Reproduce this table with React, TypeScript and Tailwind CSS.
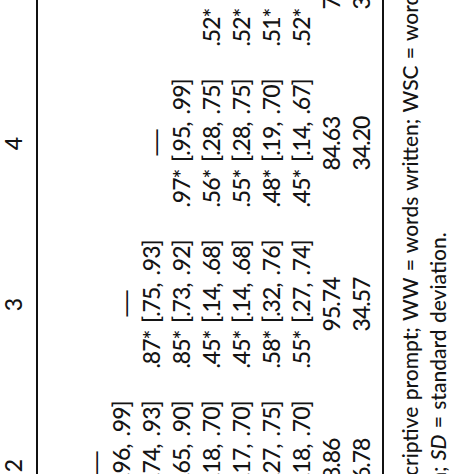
const rows: string[][] = [
  ['—', '', '', ''],
  ['.98* [.96, .99]', '—', '', ''],
  ['.86* [.74, .93]', '.87* [.75, .93]', '—', ''],
  ['.81* [.65, .90]', '.85* [.73, .92]', '.97* [.95, .99]', '—'],
  ['.48* [.18, .70]', '.45* [.14, .68]', '.56* [.28, .75]', '.52* [.24, .72]'],
  ['.47* [.17, .70]', '.45* [.14, .68]', '.55* [.28, .75]', '.52* [.24, .72]'],
  ['.55* [.27, .75]', '.58* [.32, .76]', '.48* [.19, .70]', '.51* [.22, .71]'],
  ['.48* [.18, .70]', '.55* [.27, .74]', '.45* [.14, .67]', '.52* [.24, .72]'],
  ['98.86', '95.74', '84.63', '74.37'],
  ['36.78', '34.57', '34.20', '31.62'],
];

function Cell({ v }: { v: string }) {
  if (v === '—') {
    return (
      <div>
        <span className="inline-block scale-x-[1.7] translate-y-[4px]">—</span>
      </div>
    );
  }
  return <div>{v}</div>;
}

export default function App() {
  return (
    <div className="w-[474px] h-[474px] overflow-hidden bg-white">
      <div className="w-[474px] h-[474px] -rotate-90 overflow-hidden bg-white text-[#141414] [font-family:Lato,sans-serif] font-medium">
        <div className="-mt-[2px] -ml-[72px] w-[644px] grid grid-cols-[161px_161px_161px_161px] h-[30px] leading-[30px] text-center text-[23px]">
          <div>2</div>
          <div>3</div>
          <div>4</div>
          <div>5</div>
        </div>
        <div className="mt-[8.25px] h-[1.5px] w-full bg-[#111]" />
        <div className="pt-[38.5px] -ml-[72px] w-[644px] text-[23px] tracking-[-1px] [word-spacing:3px]">
          {rows.map((r, i) => (
            <div key={i} className="grid grid-cols-[161px_161px_161px_161px] h-[30px] leading-[30px] text-center whitespace-nowrap">
              {r.map((c, j) => (
                <Cell key={j} v={c} />
              ))}
            </div>
          ))}
        </div>
        <div className="mt-[6px] h-[1.5px] w-full bg-[#111]" />
        <div className="mt-[12px] leading-[28px] whitespace-nowrap text-[21px] [word-spacing:1px]">
          <div className="flex">
            <span className="shrink-0 w-[200px] -ml-[202px] text-right">
              <i>Note.</i> DP = des
            </span>
            <span>criptive prompt; WW = words written; WSC = words spelled correctly;</span>
          </div>
          <div className="flex">
            <span className="shrink-0 w-[400px] -ml-[398px] text-right">
              CWS = correct word sequences; <i>M</i> = mean
            </span>
            <span>
              ; <i>SD</i> = standard deviation.
            </span>
          </div>
        </div>
      </div>
    </div>
  );
}
